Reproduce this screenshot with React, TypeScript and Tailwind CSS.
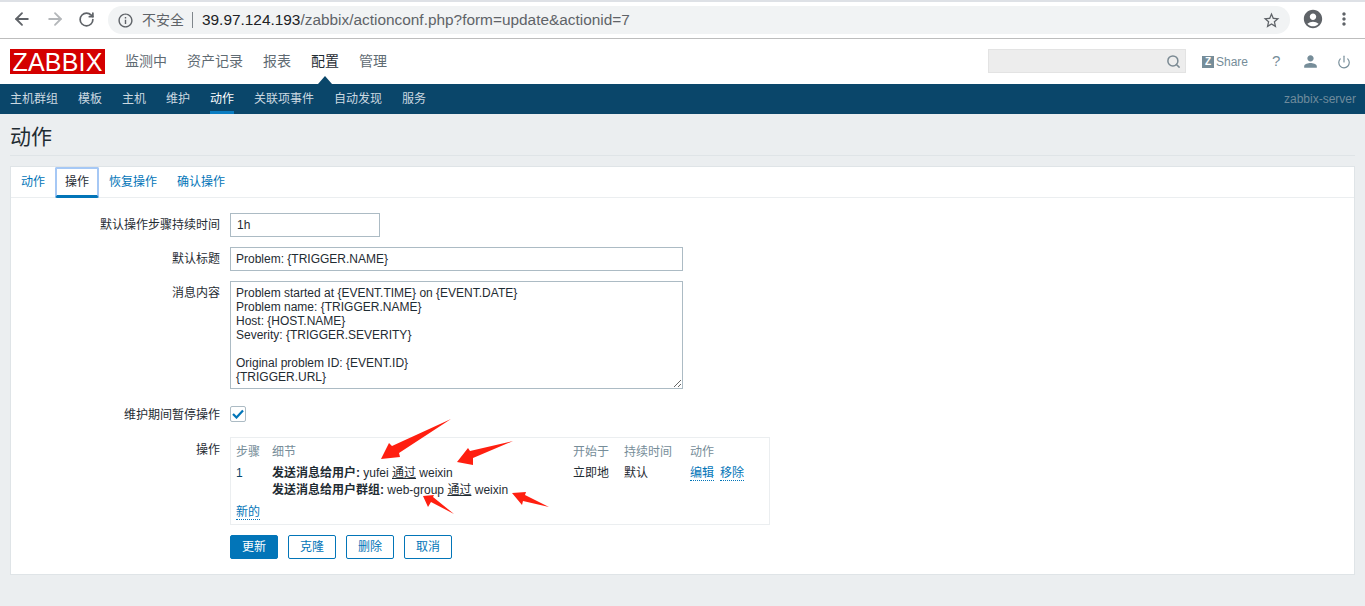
import React from "react";
import { ArrowLeft, ArrowRight, RotateCw, Search, Power } from "lucide-react";
import { MdAccountCircle, MdMoreVert, MdStarBorder, MdInfoOutline, MdPerson } from "react-icons/md";

const FONT = "[font-family:'Liberation_Sans','Noto_Sans_CJK_SC',sans-serif]";

function Arrows() {
  return (
    <svg className="absolute left-0 top-0 pointer-events-none" width="1365" height="606">
      <g fill="#ff1f10">
        <polygon points="451,419 399,453 400,457 381,459 389,443 392,446" />
        <polygon points="513,441 473,458 473,465 457,462 468,448 470,451" />
        <polygon points="454,514 431,502 428,507 423,496 434,495 433,497" />
        <polygon points="549,507 523,501 522,505 512,493 526,492 525,495" />
      </g>
    </svg>
  );
}

function Chrome() {
  return (
    <div className="h-[39px] bg-white border-b border-[#bdbdbd] flex items-center relative">
      <div className="absolute top-0 left-0 right-0 h-[2px] bg-[#dee1e6]" />
      <div className="flex items-center w-[108px] pl-[12px] gap-[13px] text-[#5f6368]">
        <ArrowLeft size={20} strokeWidth={2.2} />
        <ArrowRight size={20} strokeWidth={2.2} className="text-[#b4b7ba]" />
        <RotateCw size={17} strokeWidth={2.4} />
      </div>
      <div className="w-[1182px] h-[28px] mt-[2px] rounded-full bg-[#f1f3f4] flex items-center pl-[9px] pr-[9px] text-[14px] text-[#5f6368]">
        <MdInfoOutline size={17} className="text-[#5f6368]" />
        <span className="ml-[8px] text-[14px]">不安全</span>
        <span className="w-px h-[16px] bg-[#80868b] mx-[8px]" />
        <span className="ml-[1px] text-[#202124] text-[15.4px]">39.97.124.193</span>
        <span className="text-[15.4px]">/zabbix/actionconf.php?form=update&amp;actionid=7</span>
        <MdStarBorder size={19} className="ml-auto text-[#5f6368]" />
      </div>
      <MdAccountCircle size={22} className="ml-[12px] text-[#5f6368]" />
      <MdMoreVert size={20} className="ml-[10px] text-[#5f6368]" />
    </div>
  );
}

function TopNav() {
  return (
    <div className="h-[45px] bg-white flex items-center pl-[10px] pr-[14px] relative">
      <div className="w-[95px] h-[25px] bg-[#d40000] border border-[#d40000] text-white text-[25px] leading-[25px] text-center tracking-[0.2px] mt-[-1px]">ZABBIX</div>
      <nav className="flex gap-[20px] ml-[20px] text-[14px] text-[#5f6b73] mt-[-1px]">
        <span>监测中</span>
        <span>资产记录</span>
        <span>报表</span>
        <span className="text-[#1f2c33] relative">配置
          <span className="absolute left-[7px] top-[25px] w-0 h-0 border-l-[7px] border-r-[7px] border-b-[8px] border-l-transparent border-r-transparent border-b-[#0a466a]" />
        </span>
        <span>管理</span>
      </nav>
      <div className="ml-auto w-[198px] h-[24px] bg-[#ededed] border border-[#e3e3e3] flex items-center justify-end pr-[4px] mt-[-1px]">
        <Search size={15} strokeWidth={2.4} className="text-[#7b8a93]" />
      </div>
      <div className="flex items-center ml-[16px] text-[12px] text-[#768d99] w-[46px]">
        <span className="w-[12px] h-[12px] bg-[#768d99] text-white text-[10px] leading-[12px] font-bold text-center mr-[2px]">Z</span>
        Share
      </div>
      <span className="ml-[24px] text-[15px] text-[#768d99] w-[8px]">?</span>
      <MdPerson size={19} className="ml-[21px] text-[#768d99]" />
      <Power size={14} strokeWidth={2} className="ml-[17px] text-[#768d99]" />
    </div>
  );
}

function SubNav() {
  const items = ["主机群组", "模板", "主机", "维护", "动作", "关联项事件", "自动发现", "服务"];
  return (
    <div className="h-[30px] bg-[#0a466a] flex items-stretch pl-[10px] pr-[9px] text-[12px] text-[#ccd9e1]">
      <div className="flex gap-[20px]">
        {items.map((t) => (
          <span key={t} className={t === "动作" ? "leading-[30px] text-white border-b-[3px] border-[#0a7cc1] h-[30px]" : "leading-[30px]"}>{t}</span>
        ))}
      </div>
      <span className="ml-auto leading-[30px] text-[#6f8b9c]">zabbix-server</span>
    </div>
  );
}

function Row({ label, children, className = "", labelClass = "pt-[4px]" }: { label: string; children: React.ReactNode; className?: string; labelClass?: string }) {
  return (
    <div className={`flex ${className}`}>
      <div className={`w-[210px] text-right text-[12px] leading-[16px] text-[#1f2c33] shrink-0 ${labelClass}`}>{label}</div>
      <div className="ml-[10px]">{children}</div>
    </div>
  );
}

function Link({ children }: { children: React.ReactNode }) {
  return <span className="text-[#0275b8] border-b border-dotted border-[#0275b8] leading-[14px] inline-block">{children}</span>;
}

function OpsTable() {
  return (
    <div className="w-[540px] h-[88px] border border-[#ebeef0] px-[5px] pt-[6px] text-[12px] leading-[16px] text-[#1f2c33]">
      <div className="grid grid-cols-[36px_301px_51px_66px_1fr] text-[#768d99] h-[16px]">
        <span>步骤</span><span>细节</span><span>开始于</span><span>持续时间</span><span>动作</span>
      </div>
      <div className="grid grid-cols-[36px_301px_51px_66px_1fr] mt-[5px]">
        <span className="text-[#0a466a]">1</span>
        <div className="leading-[17px]">
          <div><b className="font-bold">发送消息给用户:</b> yufei <span className="underline">通过</span> weixin</div>
          <div><b className="font-bold">发送消息给用户群组:</b> web-group <span className="underline">通过</span> weixin</div>
        </div>
        <span>立即地</span>
        <span>默认</span>
        <div className="flex gap-[6px] items-start pt-[1px]"><Link>编辑</Link><Link>移除</Link></div>
      </div>
      <div className="mt-[5px]"><Link>新的</Link></div>
    </div>
  );
}

function Btn({ children, primary }: { children: React.ReactNode; primary?: boolean }) {
  return (
    <button className={primary
      ? "w-[48px] h-[24px] rounded-[2px] bg-[#0275b8] border border-[#0275b8] text-white text-[12px]"
      : "w-[48px] h-[24px] rounded-[2px] bg-white border border-[#0275b8] text-[#0275b8] text-[12px]"}>{children}</button>
  );
}

const tpl = ["Problem started at {EVENT.TIME} on {EVENT.DATE}", "Problem name: {TRIGGER.NAME}", "Host: {HOST.NAME}", "Severity: {TRIGGER.SEVERITY}", "", "Original problem ID: {EVENT.ID}", "{TRIGGER.URL}"].join("\n");

export default function App() {
  return (
    <div className={`relative w-[1365px] h-[606px] overflow-hidden bg-[#ebeef0] ${FONT}`}>
      <Chrome />
      <TopNav />
      <SubNav />
      <div className="px-[10px]">
        <div className="h-[42px] border-b border-[#dfe4e7] text-[21px] leading-[45px] text-[#1f2c33]">动作</div>
        <div className="mt-[10px] h-[409px] bg-white border border-[#dfe4e7]">
          <div className="h-[31px] border-b border-[#ebeef0] flex pl-[10px] gap-[10px] text-[12px] text-[#0275b8]">
            <span className="leading-[30px]">动作</span>
            <span className="w-[44px] h-[31px] text-center leading-[27px] text-[#1f2c33] border-2 border-[#a6c8f5] border-b-[3px] border-b-[#0275b8] rounded-[2px]">操作</span>
            <span className="leading-[30px]">恢复操作</span>
            <span className="leading-[30px] ml-[10px]">确认操作</span>
          </div>
          <div className="pt-[15px] -ml-px">
            <Row label="默认操作步骤持续时间">
              <div className="w-[150px] h-[24px] border border-[#acbbc4] text-[12px] leading-[22px] pl-[6px] text-[#1f2c33]">1h</div>
            </Row>
            <Row label="默认标题" className="mt-[10px]">
              <div className="w-[453px] h-[24px] border border-[#acbbc4] text-[12px] leading-[22px] pl-[5px] text-[#1f2c33]">Problem: {"{TRIGGER.NAME}"}</div>
            </Row>
            <Row label="消息内容" className="mt-[10px]">
              <textarea readOnly value={tpl} className="block w-[453px] h-[108px] border border-[#acbbc4] text-[12px] leading-[14px] px-[5px] py-[4px] text-[#1f2c33] outline-none" />
            </Row>
            <Row label="维护期间暂停操作" className="mt-[16px]" labelClass="pt-[2px]">
              <div className="w-[16px] h-[16px] border border-[#acbbc4] rounded-[2px] flex items-center justify-center mt-[1px]">
                <svg width="12" height="10" viewBox="0 0 12 10" fill="none" stroke="#0275b8" strokeWidth="2.2"><path d="M1 5l3.5 3.5L11 1.5" /></svg>
              </div>
            </Row>
            <Row label="操作" className="mt-[14px]" labelClass="pt-[5px]">
              <OpsTable />
            </Row>
            <div className="flex gap-[10px] ml-[220px] mt-[10px]">
              <Btn primary>更新</Btn><Btn>克隆</Btn><Btn>删除</Btn><Btn>取消</Btn>
            </div>
          </div>
        </div>
      </div>
      <Arrows />
    </div>
  );
}
